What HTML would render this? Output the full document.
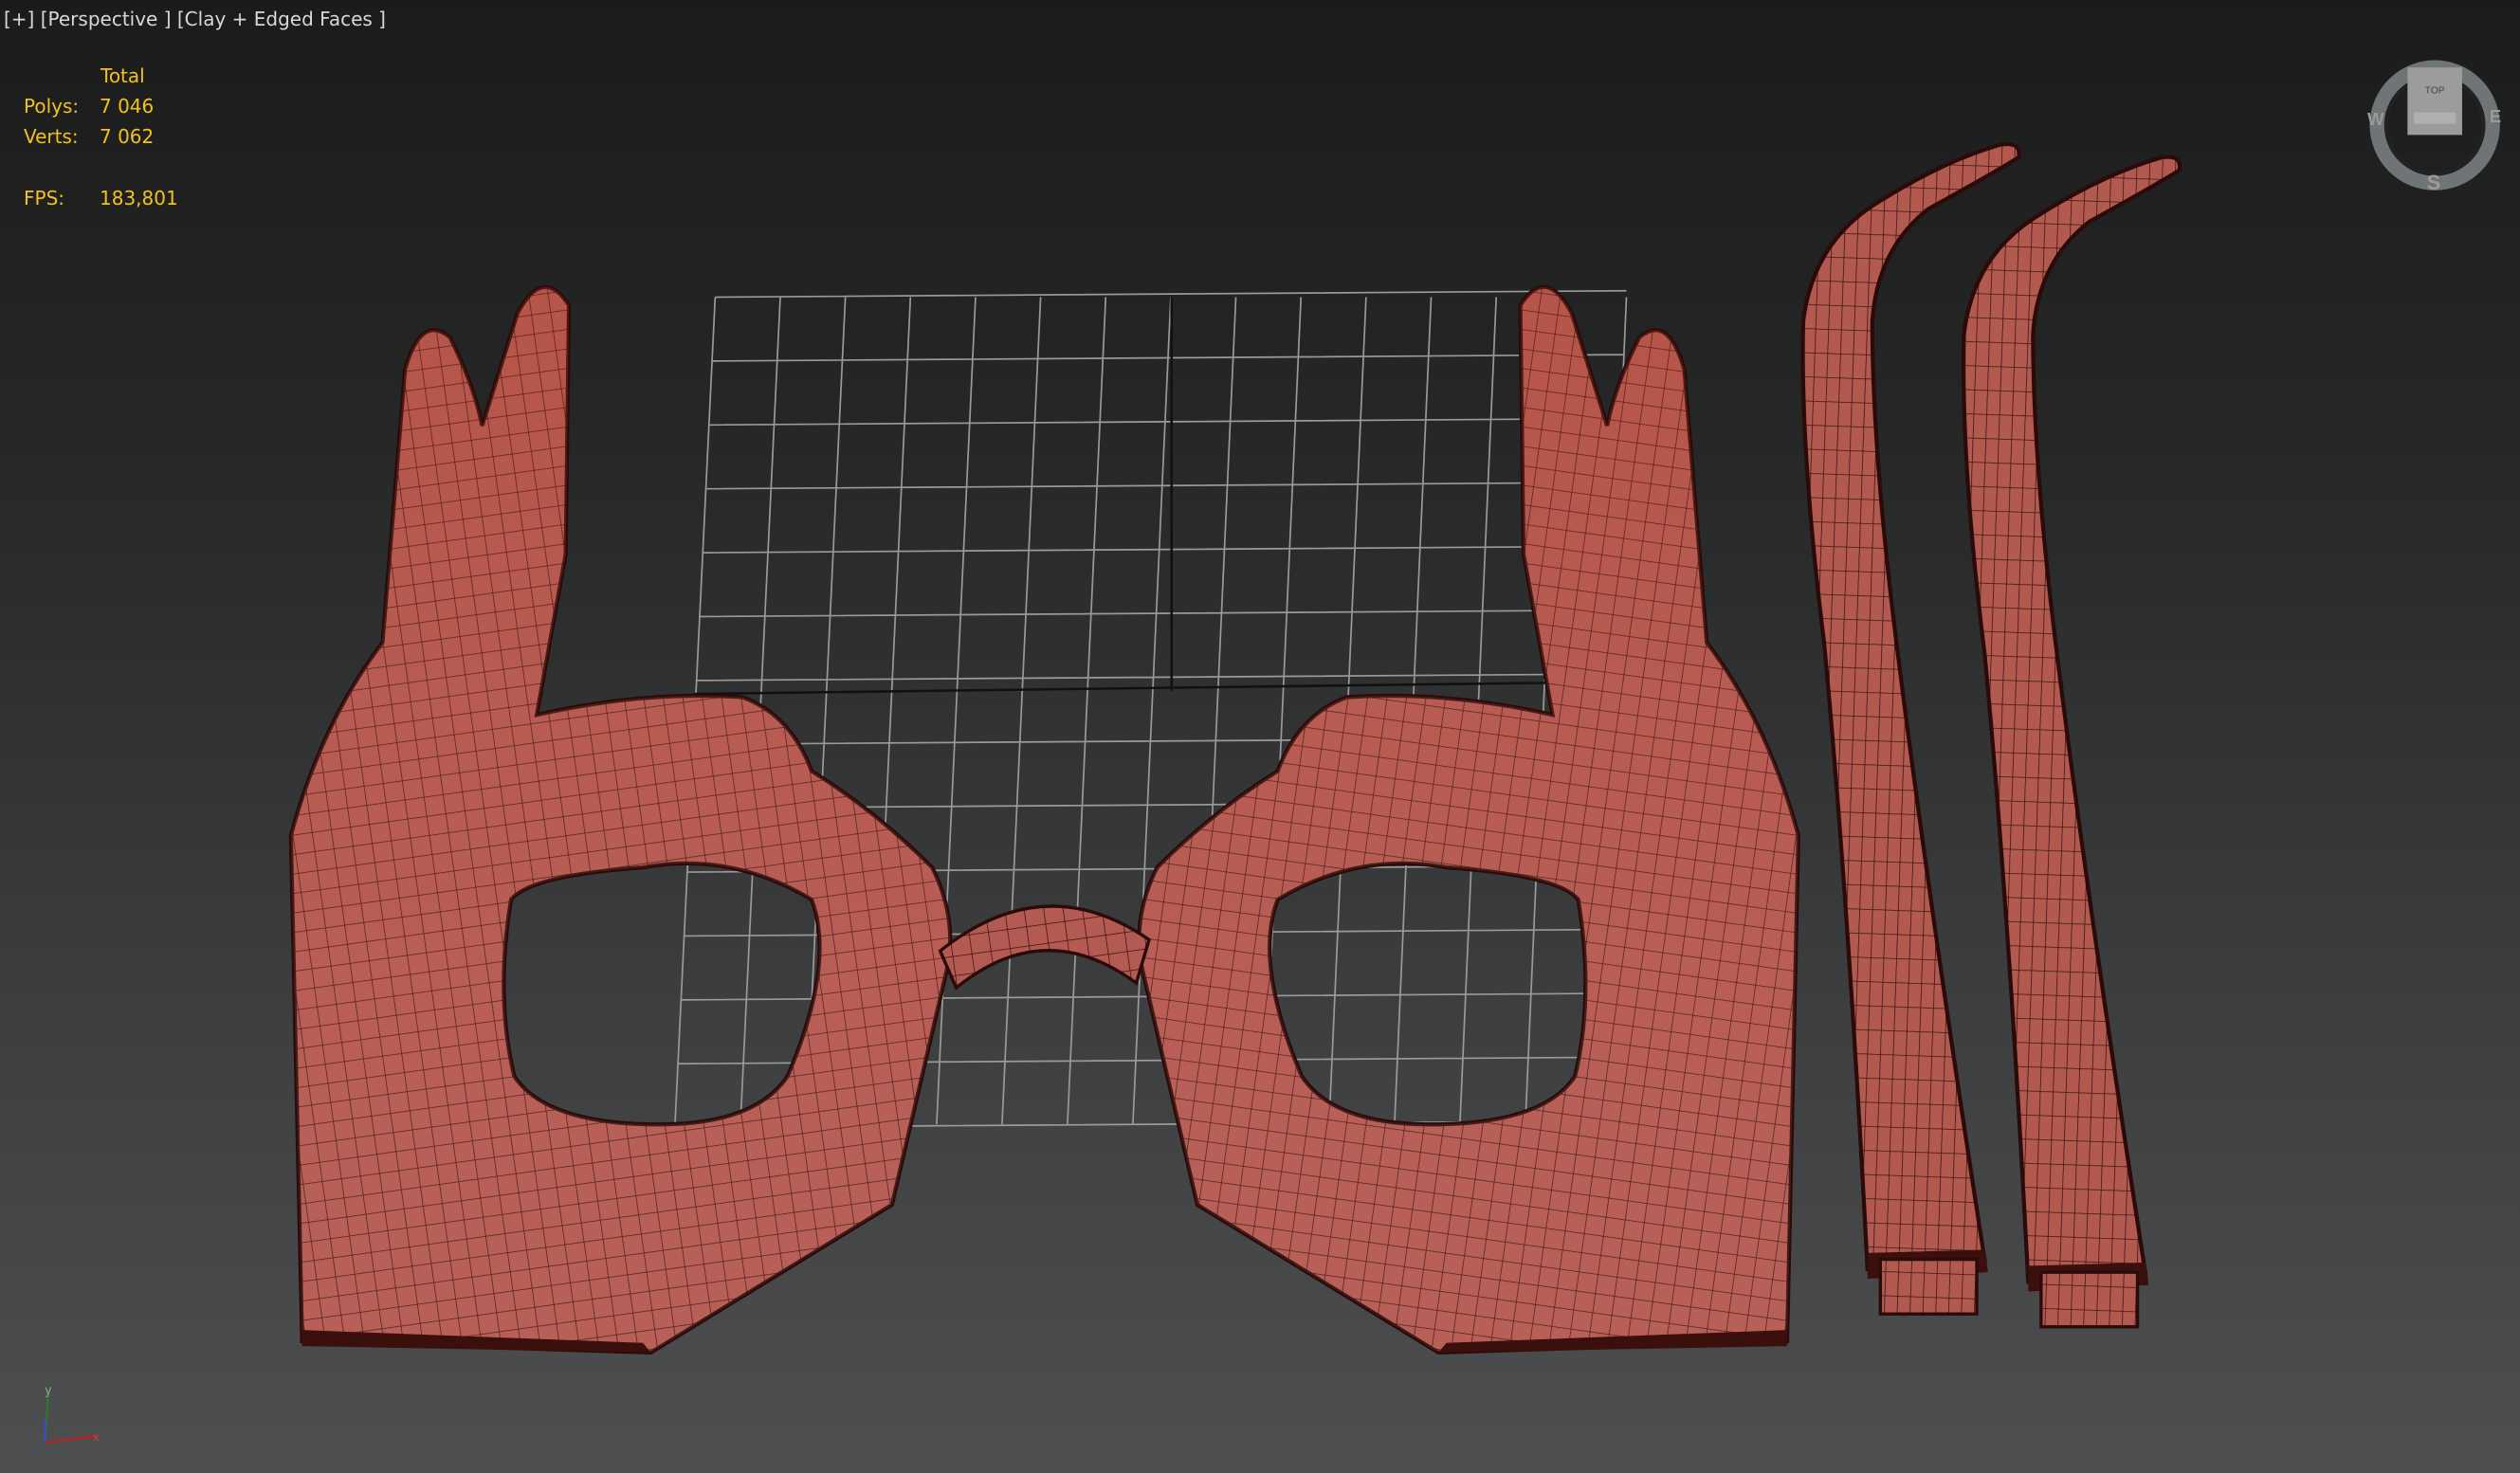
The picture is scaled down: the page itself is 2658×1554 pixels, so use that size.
<!DOCTYPE html>
<html><head><meta charset="utf-8"><style>
html,body{margin:0;padding:0;width:2658px;height:1554px;overflow:hidden;background:#2b2c2c}
svg{position:absolute;left:0;top:0}
.t{position:absolute;font-family:"DejaVu Sans","Liberation Sans",sans-serif;font-size:20px;white-space:nowrap}
.w{color:#d8d8d8}.y{color:#f2c21c}
</style></head><body>
<svg width="2658" height="1554" viewBox="0 0 1568 917" preserveAspectRatio="none">
<defs>
<linearGradient id="bg" x1="0" y1="0" x2="0" y2="1">
<stop offset="0" stop-color="#1b1b1b"/><stop offset="0.3" stop-color="#262727"/><stop offset="0.7" stop-color="#3d3f40"/><stop offset="1" stop-color="#4d4f50"/>
</linearGradient>
<pattern id="mesh" width="12" height="12" patternUnits="userSpaceOnUse" patternTransform="rotate(-8)">
<rect width="12" height="12" fill="#b35a52"/>
<path d="M0 0H12M0 0V12" stroke="#3a1311" stroke-width="0.9"/>
</pattern>
<pattern id="mesh2" width="8" height="15" patternUnits="userSpaceOnUse" patternTransform="rotate(2)">
<rect width="8" height="15" fill="#b25a50"/>
<path d="M0 0H8M0 0V15" stroke="#3a1311" stroke-width="0.9"/>
</pattern>
<linearGradient id="shade" x1="0" y1="0" x2="0" y2="1">
<stop offset="0" stop-color="#c0442e" stop-opacity="0.25"/><stop offset="1" stop-color="#d88a88" stop-opacity="0.12"/>
</linearGradient>
<g id="hand">
<path fill-rule="evenodd" fill="url(#mesh)" stroke="#2a0b09" stroke-width="2.5" d="M188,835 L181,520 Q200,450 238,400 L252,230 Q262,195 280,210 Q295,240 300,265 L322,195 Q338,165 354,190 L352,345 L334,445 Q400,430 462,434 Q492,445 505,480 Q545,505 580,540 Q595,570 590,600 L555,750 L405,842 Z M318,560 Q330,545 400,540 Q455,530 505,560 Q520,600 490,670 Q470,700 410,700 Q340,700 320,670 Q308,620 318,560 Z"/>
<path fill="url(#shade)" fill-rule="evenodd" d="M188,835 L181,520 Q200,450 238,400 L252,230 Q262,195 280,210 Q295,240 300,265 L322,195 Q338,165 354,190 L352,345 L334,445 Q400,430 462,434 Q492,445 505,480 Q545,505 580,540 Q595,570 590,600 L555,750 L405,842 Z M318,560 Q330,545 400,540 Q455,530 505,560 Q520,600 490,670 Q470,700 410,700 Q340,700 320,670 Q308,620 318,560 Z"/>
<path d="M188,828 L400,836 L405,842 L188,838 Z" fill="#3a0f0c"/>
</g>
<g id="tube">
<path d="M1162,790 Q1150,560 1135,400 Q1120,280 1122,200 Q1128,150 1170,125 Q1210,100 1245,90 Q1258,88 1256,98 Q1240,108 1200,130 Q1168,155 1165,200 Q1165,280 1180,400 Q1200,560 1235,785 Z" fill="url(#mesh2)" stroke="#2a0b09" stroke-width="2.5"/>
<path d="M1162,780 L1235,778 L1237,792 L1162,796 Z" fill="#3a0f0c"/>
<rect x="1170" y="784" width="60" height="34" fill="url(#mesh2)" stroke="#2a0b09" stroke-width="2"/>
</g>
</defs>
<rect width="1568" height="917" fill="url(#bg)"/>
<g id="grid" stroke="#9a9a9a" stroke-width="1" fill="none"></g>
<path d="M729,185 L729,430 M432,432 L970,425" stroke="#111" stroke-width="1.5"/>
<use href="#hand"/>
<use href="#hand" transform="translate(1300,0) scale(-1,1)"/>
<path d="M585,592 Q650,540 715,585 L707,612 Q650,570 595,615 Z" fill="url(#mesh)" stroke="#2a0b09" stroke-width="2"/>
<use href="#tube"/>
<use href="#tube" transform="translate(100,8)"/>
<g transform="translate(1515,78)">
<circle r="36" fill="none" stroke="#6f7476" stroke-width="9"/>
<circle r="30" fill="none" stroke="#222" stroke-width="2"/>
<rect x="-17" y="-36" width="34" height="42" fill="#9c9c9c"/>
<rect x="-13" y="-8" width="26" height="7" fill="#b0b0b0"/>
<text y="-20" text-anchor="middle" font-size="6" fill="#444" font-family="Liberation Sans">TOP</text>
<text x="-42" y="0" font-size="11" font-weight="bold" fill="#9a9a9a" font-family="Liberation Sans">W</text>
<text x="34" y="-2" font-size="11" font-weight="bold" fill="#9a9a9a" font-family="Liberation Sans">E</text>
<text x="-5" y="40" font-size="13" font-weight="bold" fill="#9a9a9a" font-family="Liberation Sans">S</text>
</g>
<g transform="translate(28,898)" stroke-width="1.3">
<path d="M0,0 L32,-4" stroke="#c02020"/>
<path d="M0,0 L2,-30" stroke="#2a7a2a"/>
<path d="M0,0 L0,-14" stroke="#3a4ad0"/>
<text x="0" y="-30" font-size="8" fill="#8a8" font-family="Liberation Sans">y</text>
<text x="30" y="-1" font-size="7" fill="#c44" font-family="Liberation Sans">x</text>
</g>
</svg>
<div class="t w" style="left:4px;top:8px">[+] [Perspective ] [Clay + Edged Faces ]</div>
<div class="t y" style="left:106px;top:68px">Total</div>
<div class="t y" style="left:25px;top:100px">Polys:</div><div class="t y" style="left:105px;top:100px">7 046</div>
<div class="t y" style="left:25px;top:132px">Verts:</div><div class="t y" style="left:105px;top:132px">7 062</div>
<div class="t y" style="left:25px;top:197px">FPS:</div><div class="t y" style="left:105px;top:197px">183,801</div>
<script>
var g=document.getElementById('grid'),s='';
for(var i=0;i<=14;i++){var xt=445+i*40.5,xb=420+i*40.7;s+='M'+xt+',185 L'+xb+',700 ';}
for(var j=0;j<=13;j++){var f=j/13,y=185+f*515,xl=445-25*f,xr=1012-22*f;s+='M'+xl+','+(y+2*f)+' L'+xr+','+(y-4+f*2)+' ';}
var p=document.createElementNS('http://www.w3.org/2000/svg','path');p.setAttribute('d',s);g.appendChild(p);
</script>
</body></html>
